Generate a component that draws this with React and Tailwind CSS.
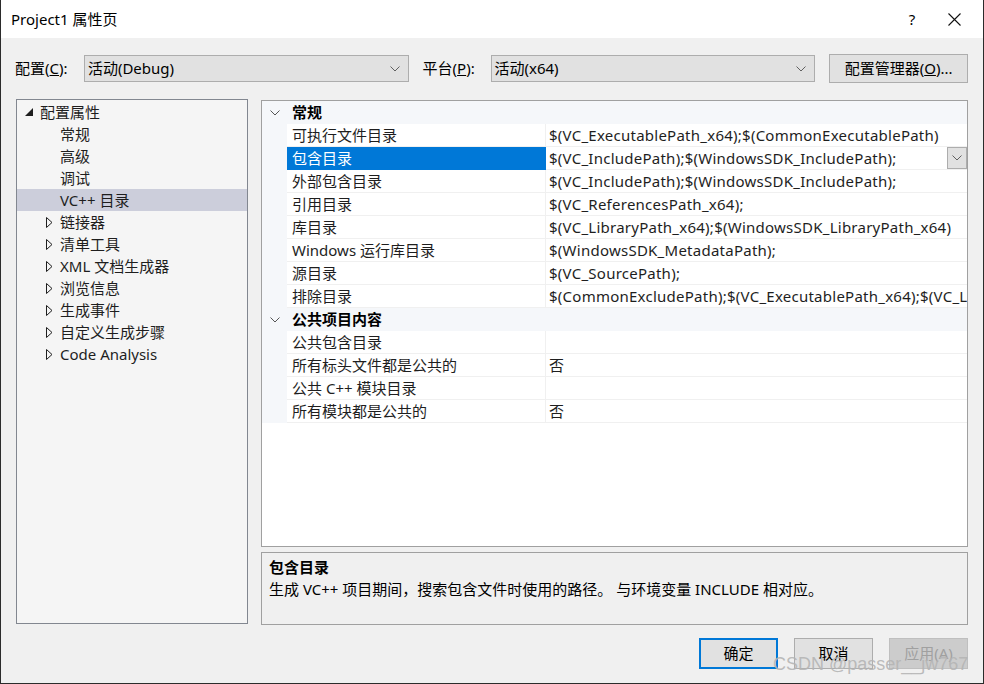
import React from "react";

const font = "font-['Segoe_UI','Noto_Sans','Noto_Sans_CJK_SC',sans-serif]";

const Chevron = ({ className }) => (
  <svg className={className} width="10" height="6" viewBox="0 0 10 6" fill="none">
    <path d="M0.5 0.5L5 5L9.5 0.5" stroke="currentColor" strokeWidth="1" />
  </svg>
);

const Combo = ({ width, text }) => (
  <div className={`${width} h-[27px] flex items-center justify-between border border-[#adadad] bg-[#e1e1e1] pl-[3px] pr-[8px]`}>
    <span>{text}</span>
    <Chevron className="text-[#606060]" />
  </div>
);

const treeItems = [
  { label: "常规", kind: "leaf" },
  { label: "高级", kind: "leaf" },
  { label: "调试", kind: "leaf" },
  { label: "VC++ 目录", kind: "leaf", selected: true },
  { label: "链接器", kind: "closed" },
  { label: "清单工具", kind: "closed" },
  { label: "XML 文档生成器", kind: "closed" },
  { label: "浏览信息", kind: "closed" },
  { label: "生成事件", kind: "closed" },
  { label: "自定义生成步骤", kind: "closed" },
  { label: "Code Analysis", kind: "closed" },
];

const TreeRow = ({ item }) => (
  <div className={`h-[22px] flex items-center whitespace-nowrap ${item.selected ? "bg-[#cccedb]" : ""}`}>
    <div className="w-[43px] shrink-0 flex justify-end pr-[7px]">
      {item.kind === "closed" && (
        <svg width="7" height="11" viewBox="0 0 7 11">
          <path d="M0.5 0.5L6 5.5L0.5 10.5Z" fill="none" stroke="#1e1e1e" strokeWidth="1" />
        </svg>
      )}
    </div>
    <span className="text-[#1e1e1e]">{item.label}</span>
  </div>
);

const groups = [
  {
    title: "常规",
    rows: [
      ["可执行文件目录", "$(VC_ExecutablePath_x64);$(CommonExecutablePath)"],
      ["包含目录", "$(VC_IncludePath);$(WindowsSDK_IncludePath);", true],
      ["外部包含目录", "$(VC_IncludePath);$(WindowsSDK_IncludePath);"],
      ["引用目录", "$(VC_ReferencesPath_x64);"],
      ["库目录", "$(VC_LibraryPath_x64);$(WindowsSDK_LibraryPath_x64)"],
      ["Windows 运行库目录", "$(WindowsSDK_MetadataPath);"],
      ["源目录", "$(VC_SourcePath);"],
      ["排除目录", "$(CommonExcludePath);$(VC_ExecutablePath_x64);$(VC_LibraryPath_x64)"],
    ],
  },
  {
    title: "公共项目内容",
    rows: [
      ["公共包含目录", ""],
      ["所有标头文件都是公共的", "否"],
      ["公共 C++ 模块目录", ""],
      ["所有模块都是公共的", "否"],
    ],
  },
];

const PropRow = ({ name, value, selected }) => (
  <div className="h-[23px] flex">
    <div className="w-[25px] shrink-0 bg-[#f5f7fa]" />
    <div className={`w-[259px] shrink-0 flex items-center pl-[5px] border-b border-r ${selected ? "bg-[#0078d7] text-white border-[#0078d7]" : "bg-white border-[#f0f0f0]"}`}>
      {name}
    </div>
    <div className="flex-1 min-w-0 flex items-center bg-white border-b border-[#f0f0f0] pl-[3px] overflow-hidden relative">
      <span className="whitespace-nowrap tracking-[0.25px]">{value}</span>
      {selected && (
        <div className="absolute right-0 top-0 w-[20px] h-[22px] bg-[#e1e1e1] border border-[#adadad] flex items-center justify-center">
          <Chevron className="text-[#606060]" />
        </div>
      )}
    </div>
  </div>
);

const Btn = ({ label, primary, disabled }) => (
  <div
    className={`w-[79px] h-[31px] flex items-center justify-center ${
      primary
        ? "border-2 border-[#0078d7] bg-[#e1e1e1] text-black"
        : disabled
        ? "border border-[#bfbfbf] bg-[#cccccc] text-[#a0a0a0]"
        : "border border-[#adadad] bg-[#e1e1e1] text-black"
    }`}
  >
    {label}
  </div>
);

export default function App() {
  return (
    <div className={`${font} w-[984px] h-[684px] text-[15px] text-[#1e1e1e] bg-[#f0f0f0] border-x border-b border-[#2b2b2b] flex flex-col relative`}>
      {/* title bar */}
      <div className="h-[38px] bg-white flex items-center pl-[10px] shrink-0">
        <span className="flex-1 text-black">Project1 属性页</span>
        <span className="w-[30px] text-center text-black">?</span>
        <div className="w-[56px] flex justify-center pr-[2px]">
          <svg width="13" height="13" viewBox="0 0 13 13">
            <path d="M0.5 0.5L12.5 12.5M12.5 0.5L0.5 12.5" stroke="#111" strokeWidth="1.1" />
          </svg>
        </div>
      </div>

      {/* config row */}
      <div className="flex items-center h-[29px] mt-[16px] pl-[14px] pr-[15px] text-black">
        <span className="w-[69px]">配置(<span className="underline">C</span>):</span>
        <Combo width="w-[325px]" text="活动(Debug)" />
        <span className="ml-[14px] w-[68px]">平台(<span className="underline">P</span>):</span>
        <Combo width="w-[325px]" text="活动(x64)" />
        <div className="ml-[14px] w-[139px] h-[29px] border border-[#adadad] bg-[#e1e1e1] flex items-center justify-center">
          配置管理器(<span className="underline">O</span>)...
        </div>
      </div>

      {/* main area */}
      <div className="flex mt-[16px] pl-[15px] pr-[15px] gap-[13px]">
        {/* tree */}
        <div className="w-[232px] shrink-0 h-[525px] border border-[#828790] bg-[#f5f5f5] pt-px">
          <div className="h-[22px] flex items-center">
            <div className="w-[23px] shrink-0 flex justify-end pr-[7px]">
              <svg width="8" height="8" viewBox="0 0 8 8">
                <path d="M8 0L8 8L0 8Z" fill="#1e1e1e" />
              </svg>
            </div>
            <span>配置属性</span>
          </div>
          {treeItems.map((item) => (
            <TreeRow key={item.label} item={item} />
          ))}
        </div>

        {/* right column */}
        <div className="flex-1 min-w-0 flex flex-col">
          <div className="h-[447px] border border-[#a0a0a0] bg-white mt-px">
            {groups.map((g) => (
              <div key={g.title}>
                <div className="h-[23px] flex items-center bg-[#f5f7fa]">
                  <div className="w-[25px] flex justify-center">
                    <Chevron className="text-[#555]" />
                  </div>
                  <span className="font-bold pl-[5px] text-black">{g.title}</span>
                </div>
                {g.rows.map(([n, v, s]) => (
                  <PropRow key={n} name={n} value={v} selected={s} />
                ))}
              </div>
            ))}
          </div>

          <div className="h-[73px] mt-[5px] border border-[#a0a0a0] bg-[#f0f0f0] px-[7px] pt-[3px] text-black">
            <div className="font-bold h-[22px] flex items-center">包含目录</div>
            <div className="h-[22px] flex items-center">生成 VC++ 项目期间，搜索包含文件时使用的路径。 与环境变量 INCLUDE 相对应。</div>
          </div>
        </div>
      </div>

      {/* buttons */}
      <div className="flex justify-end gap-[16px] pr-[15px] mt-[13px]">
        <Btn label="确定" primary />
        <Btn label="取消" />
        <Btn label="应用(A)" disabled />
      </div>

      <div className="absolute left-[772px] top-[651px] text-[18px] font-['Liberation_Sans',sans-serif] text-[#b4b4b4]/90 pointer-events-none">
        CSDN @passer__jw767
      </div>
    </div>
  );
}
